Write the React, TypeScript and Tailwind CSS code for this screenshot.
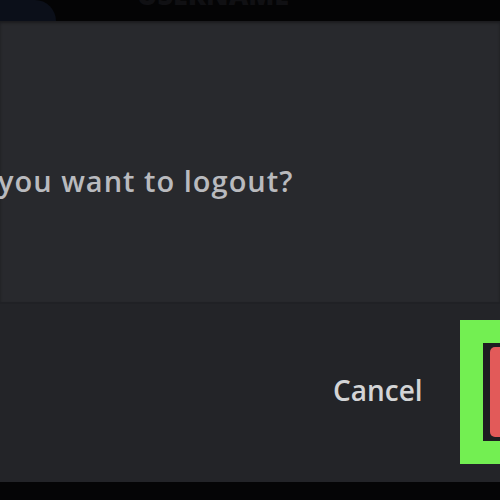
export default function App() {
  return (
    <div className="flex h-[500px] w-[500px] flex-col overflow-hidden bg-[#050506] font-['Open_Sans',sans-serif]">
      {/* top strip behind the modal */}
      <div className="flex h-[21px] shrink-0 overflow-hidden bg-[#040405]">
        <div className="h-full w-[56px] shrink-0 rounded-tr-[24px] bg-[#0b0f19]" />
        <div className="ml-[81px] -mt-[19px] whitespace-nowrap text-[27px] font-extrabold leading-none text-[#101013]">
          USERNAME
        </div>
      </div>

      {/* modal body */}
      <div className="h-[281px] shrink-0 bg-[#28292d] pt-[145px] shadow-[inset_0_2px_3px_rgba(0,0,0,0.35)]">
        <p className="-ml-[2px] whitespace-nowrap text-[29px] font-semibold leading-none tracking-[1px] text-[#b9babe]">
          you want to logout?
        </p>
      </div>

      {/* modal footer */}
      <div className="flex h-[180px] shrink-0 items-start border-t-[2px] border-[#202125] bg-[#232428] pl-[333px] pt-[16px]">
        <button className="mt-[56px] w-[90px] shrink-0 whitespace-nowrap text-left text-[28px] font-semibold leading-none text-[#d3d4d6]">
          Cancel
        </button>
        <div className="ml-[37px] shrink-0 bg-[#73ef52] py-[23px] pl-[23px]">
          <div className="w-[60px] bg-[#1d1e21] py-[4px] pl-[7px]">
            <div className="h-[90px] rounded-l-[5px] bg-[#e25a59]" />
          </div>
        </div>
      </div>
    </div>
  );
}
